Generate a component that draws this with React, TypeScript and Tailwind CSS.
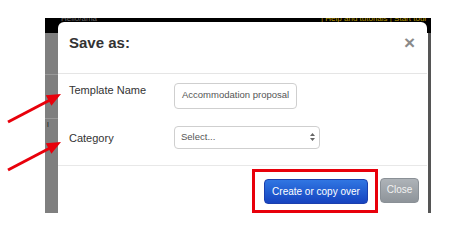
export default function App() {
  return (
    <div className="relative w-[474px] h-[246px] bg-white overflow-hidden font-['Liberation_Sans',Arial,sans-serif]">
      {/* backdrop screenshot, its top bar mostly hidden behind the modal */}
      <div className="absolute left-[45px] top-[18px] w-[386px] h-[195px] flex flex-col">
        <div className="h-[15px] bg-black flex items-start justify-between pl-[16px] pr-[4px] text-[8px] leading-[8px] overflow-hidden">
          <span className="text-[#666] -mt-[3px]">Hello/ama</span>
          <span className="text-[#b89800] -mt-[3px]">| Help and tutorials | Start tour</span>
        </div>
        <div className="flex-1 flex">
          <div className="w-[13px] bg-[#7f7f7f] flex flex-col">
            <div className="h-[42px] border-b border-[#999]" />
            <div className="h-[44px] border-b border-[#999]" />
            <div className="h-[12px] text-[8px] leading-[12px] text-[#222] pl-[2px]">l</div>
          </div>
          <div className="flex-1" />
          <div className="w-[3px] bg-[#555]" />
        </div>
      </div>

      {/* modal */}
      <div className="absolute left-[58px] top-[22px] w-[369px] h-[191px] bg-white rounded-t-[6px] flex flex-col">
        <div className="h-[56px] px-[11px] pt-[12px] flex items-start justify-between border-b border-[#e5e5e5]">
          <h2 className="text-[15px] leading-[18px] font-bold text-[#333]">Save as:</h2>
          <span className="text-[19px] leading-[18px] font-bold text-[#8a8a8a] mr-[1px]">×</span>
        </div>
        <div className="px-[11px] pt-[9px] pb-[16px] flex flex-col gap-[17px] border-b border-[#e8e8e8]">
          <div className="flex items-start">
            <div className="w-[105px] text-[11px] leading-[12px] text-[#333] pt-[1px]">Template Name</div>
            <div className="w-[123px] h-[26px] border border-[#cfcfcf] rounded-[4px] pl-[7px] flex items-center text-[9.5px] text-[#555] whitespace-nowrap overflow-hidden">
              Accommodation proposal
            </div>
          </div>
          <div className="flex items-center">
            <div className="w-[105px] text-[11px] leading-[12px] text-[#333] pt-[1px]">Category</div>
            <div className="w-[146px] h-[23px] border border-[#cfcfcf] rounded-[4px] pl-[6px] pr-[4px] flex items-center justify-between text-[9.5px] text-[#555]">
              <span>Select...</span>
              <svg width="5" height="8" viewBox="0 0 5 8">
                <path d="M2.5 0 L5 3 L0 3 Z M0 5 L5 5 L2.5 8 Z" fill="#666" />
              </svg>
            </div>
          </div>
        </div>
        <div className="flex justify-end items-start pt-[3px] pr-[8px]">
          <div className="border-[3px] border-[#e8000b] pl-[9px] pr-[7px] py-[6px]">
            <button className="w-[104px] h-[25px] rounded-[4px] border border-[#1b3fae] bg-gradient-to-b from-[#3176e2] to-[#1743c0] text-white text-[10px] leading-none">
              Create or copy over
            </button>
          </div>
          <button className="ml-[2px] mt-[9px] w-[39px] h-[25px] rounded-[4px] border border-[#8a9096] bg-gradient-to-b from-[#aeb3b8] to-[#8e949a] text-[#f2f2f2] text-[10px] leading-none">
            Close
          </button>
        </div>
      </div>

      {/* annotation arrows */}
      <svg className="absolute left-0 top-0" width="474" height="246" viewBox="0 0 474 246">
        <line x1="8" y1="122" x2="50" y2="100" stroke="#e8000b" strokeWidth="3" />
        <polygon points="61,94 51.4,105.8 45.8,95.2" fill="#e8000b" />
        <line x1="8" y1="170" x2="50" y2="148" stroke="#e8000b" strokeWidth="3" />
        <polygon points="61,142 51.4,153.8 45.8,143.2" fill="#e8000b" />
      </svg>
    </div>
  );
}
